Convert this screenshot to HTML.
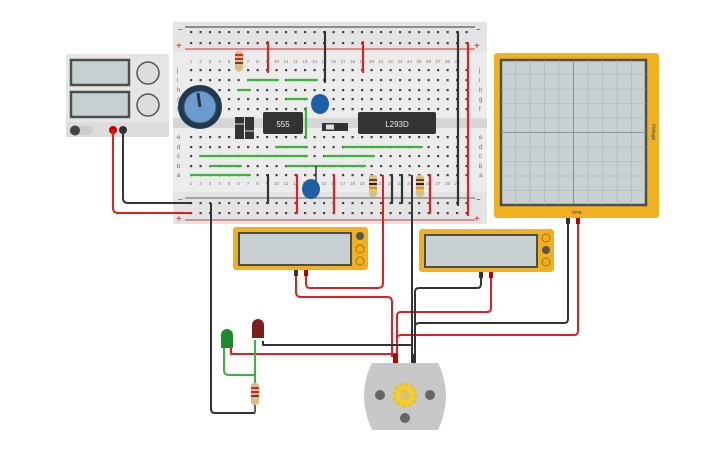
<!DOCTYPE html>
<html><head><meta charset="utf-8"><style>
html,body{margin:0;padding:0;background:#fff;width:725px;height:453px;overflow:hidden}
svg{display:block}
text{font-family:"Liberation Sans",sans-serif}
</style></head><body>
<svg width="725" height="453" viewBox="0 0 725 453" xmlns="http://www.w3.org/2000/svg">
<!-- breadboard -->
<rect x="173" y="22" width="314" height="202" rx="2" fill="#e4e4e4"/>
<rect x="173" y="52" width="314" height="140" fill="#ececec"/>
<rect x="173" y="118" width="314" height="10" fill="#d6d6d6"/>
<line x1="185" y1="27" x2="475" y2="27" stroke="#333" stroke-width="1"/>
<line x1="185" y1="49" x2="475" y2="49" stroke="#c33" stroke-width="1"/>
<line x1="185" y1="198" x2="475" y2="198" stroke="#666" stroke-width="1"/>
<line x1="185" y1="220" x2="475" y2="220" stroke="#c33" stroke-width="1"/>
<g id="holes"></g>
<text x="178" y="32" font-size="8" fill="#333">−</text><text x="176" y="49" font-size="10" fill="#c22">+</text>
<text x="476" y="32" font-size="8" fill="#333">−</text><text x="474" y="49" font-size="10" fill="#c22">+</text>
<text x="178" y="202" font-size="8" fill="#333">−</text><text x="176" y="222" font-size="10" fill="#c22">+</text>
<text x="476" y="202" font-size="8" fill="#333">−</text><text x="474" y="222" font-size="10" fill="#c22">+</text>
<g font-size="6" fill="#666">
<text x="177" y="72">j</text><text x="177" y="82">i</text><text x="177" y="92">h</text><text x="177" y="101">g</text><text x="177" y="111">f</text>
<text x="177" y="139">e</text><text x="177" y="149">d</text><text x="177" y="158">c</text><text x="177" y="168">b</text><text x="177" y="177">a</text>
<text x="479" y="72">j</text><text x="479" y="82">i</text><text x="479" y="92">h</text><text x="479" y="101">g</text><text x="479" y="111">f</text>
<text x="479" y="139">e</text><text x="479" y="149">d</text><text x="479" y="158">c</text><text x="479" y="168">b</text><text x="479" y="177">a</text>
</g>
<!-- power supply -->
<rect x="66" y="54" width="103" height="83" rx="2" fill="#e6e6e6"/>
<rect x="66" y="122" width="103" height="15" fill="#dcdcdc"/>
<rect x="71" y="60" width="58" height="25" fill="#c8d0d1" stroke="#4a4f50" stroke-width="2.5"/>
<rect x="71" y="92" width="58" height="25" fill="#c8d0d1" stroke="#4a4f50" stroke-width="2.5"/>
<circle cx="148" cy="73" r="11" fill="#ddd" stroke="#555" stroke-width="1.5"/>
<circle cx="148" cy="105" r="11" fill="#ddd" stroke="#555" stroke-width="1.5"/>
<rect x="69" y="126" width="24" height="9" rx="4.5" fill="#ccc"/><circle cx="75" cy="130.5" r="5" fill="#444"/>
<circle cx="113" cy="130" r="4" fill="#c00"/><circle cx="123" cy="130" r="4" fill="#333"/>
<path d="M123 130 V198 Q123 203 128 203 H192" fill="none" stroke="#333" stroke-width="2"/>
<path d="M113 130 V208 Q113 213 118 213 H192" fill="none" stroke="#e02020" stroke-width="2"/>
<!-- breadboard wires -->
<g fill="none" stroke-width="2.2" stroke-linecap="round">
<g stroke="#e02020">
<path d="M268 42V72M363 42V72M468 43V215M297 175V213M334 175V213M430 175V213"/>
</g>
<g stroke="#333">
<path d="M325 32V82M458 32V205M268 175V203M392 175V203M402 175V203"/>
</g>
<g stroke="#3db33d">
<path d="M248 80H278M287 80H317M238 90H250M287 99H307M306 108V138M277 147H307M344 147H422M201 156H307M325 156H374M210 166H241M287 166H365M191 175H250"/>
</g>
</g>
<!-- pot -->
<circle cx="200" cy="107" r="22" fill="#1f3a4f"/><circle cx="200" cy="107" r="16" fill="#6b9bd0" stroke="#456" stroke-width="1"/>
<line x1="200" y1="107" x2="198" y2="93" stroke="#1f3a4f" stroke-width="3"/>
<!-- resistor top -->
<rect x="235" y="51" width="8" height="20" rx="3" fill="#d9bf85"/><rect x="235" y="54" width="8" height="2" fill="#d22"/><rect x="235" y="58" width="8" height="2" fill="#d22"/><rect x="235" y="62" width="8" height="2" fill="#7a3e1a"/>
<!-- diodes -->
<rect x="235" y="117" width="9" height="22" fill="#333"/><rect x="245" y="117" width="9" height="22" fill="#333"/><rect x="245" y="130" width="9" height="2" fill="#888"/><rect x="235" y="123" width="9" height="2" fill="#888"/>
<!-- ICs -->
<rect x="263" y="112" width="40" height="22" rx="2" fill="#333"/><text x="283" y="127" font-size="8" fill="#eee" text-anchor="middle">555</text>
<rect x="358" y="112" width="78" height="22" rx="2" fill="#333"/><text x="397" y="127" font-size="8" fill="#eee" text-anchor="middle">L293D</text>
<rect x="322" y="123" width="26" height="8" fill="#333"/><rect x="326" y="124.5" width="8" height="5" fill="#ddd"/>
<!-- caps -->
<path d="M316 108 L316 96" stroke="#555" stroke-width="1.5"/><ellipse cx="320" cy="104" rx="9" ry="10" fill="#1f5fa6"/>
<path d="M316 166 V182" stroke="#333" stroke-width="1.5"/><ellipse cx="311" cy="189" rx="9" ry="10" fill="#1f5fa6"/>
<!-- resistors bottom -->
<rect x="369" y="175" width="8" height="22" rx="3" fill="#d9bf85"/><rect x="369" y="179" width="8" height="2" fill="#7a3e1a"/><rect x="369" y="183" width="8" height="2" fill="#222"/><rect x="369" y="187" width="8" height="2" fill="#f08a00"/>
<rect x="416" y="175" width="8" height="22" rx="3" fill="#d9bf85"/><rect x="416" y="179" width="8" height="2" fill="#7a3e1a"/><rect x="416" y="183" width="8" height="2" fill="#222"/><rect x="416" y="187" width="8" height="2" fill="#f08a00"/>
<!-- oscilloscope -->
<rect x="494" y="53" width="165" height="165" rx="3" fill="#f0b020"/>
<rect x="501" y="60" width="145" height="145" fill="#c8d0d1" stroke="#4a4f50" stroke-width="2.5"/>
<g stroke="#aab2b4" stroke-width="0.6">
<path d="M515.5 60V205M530 60V205M544.5 60V205M559 60V205M588 60V205M602.5 60V205M617 60V205M631.5 60V205M501 74.5H646M501 89H646M501 103.5H646M501 118H646M501 147H646M501 161.5H646M501 176H646M501 190.5H646"/>
</g>
<path d="M573.5 60V205M501 132.5H646" stroke="#7a8284" stroke-width="0.8"/>
<text x="577" y="214" font-size="5" fill="#444" text-anchor="middle">time</text>
<text x="652" y="132" font-size="5" fill="#444" text-anchor="middle" transform="rotate(90 652 132)">Voltage</text>
<!-- multimeters -->
<rect x="233" y="227" width="135" height="43" rx="3" fill="#f0b020"/>
<rect x="239" y="233" width="112" height="32" fill="#c8d0d1" stroke="#4a4f50" stroke-width="2"/>
<circle cx="360" cy="236" r="4" fill="#555"/><circle cx="360" cy="249" r="4" fill="none" stroke="#a87400"/><circle cx="360" cy="261" r="4" fill="none" stroke="#a87400"/>
<rect x="419" y="229" width="135" height="43" rx="3" fill="#f0b020"/>
<rect x="425" y="235" width="112" height="32" fill="#c8d0d1" stroke="#4a4f50" stroke-width="2"/>
<circle cx="546" cy="238" r="4" fill="none" stroke="#a87400"/><circle cx="546" cy="250" r="4" fill="#555"/><circle cx="546" cy="262" r="4" fill="none" stroke="#a87400"/>
<!-- probes -->
<rect x="294" y="270" width="4" height="6" fill="#333"/><rect x="304" y="270" width="4" height="6" fill="#b00"/>
<rect x="479" y="272" width="4" height="6" fill="#333"/><rect x="489" y="272" width="4" height="6" fill="#b00"/>
<rect x="566" y="218" width="4" height="6" fill="#333"/><rect x="576" y="218" width="4" height="6" fill="#b00"/>
<!-- external wires -->
<g fill="none" stroke-width="2" stroke-linejoin="round">
<path d="M306 276V284Q306 288 310 288H378Q383 288 383 283V175" stroke="#e02020"/>
<path d="M296 276V292Q296 297 301 297H387Q392 297 392 302V357" stroke="#e02020"/>
<path d="M491 278V308Q491 312 487 312H401Q397 312 397 316V357" stroke="#e02020"/>
<path d="M578 224V331Q578 335 574 335H401Q397 335 397 339" stroke="#e02020"/>
<path d="M481 278V284Q481 288 477 288H419Q415 288 415 292V357" stroke="#333"/>
<path d="M568 224V319Q568 323 564 323H419Q415 323 415 327" stroke="#333"/>
<path d="M412 175V357" stroke="#333"/>
<path d="M211 203V409Q211 413 215 413H255" stroke="#333"/>
<path d="M263 341V345H412" stroke="#333"/>
<path d="M231 348V354H396" stroke="#e02020"/>
<path d="M224 348V370Q224 375 229 375H255" stroke="#3db33d"/>
<path d="M255 340V384" stroke="#3db33d"/>
<path d="M255 403V413" stroke="#666"/>
</g>
<!-- LEDs -->
<path d="M221 348V335a6 6 0 0 1 12 0V348Z" fill="#1f8a2a"/>
<path d="M252 338V325a6 6 0 0 1 12 0V338Z" fill="#7a1e1e"/>
<!-- led resistor -->
<rect x="251" y="383" width="8" height="22" rx="3" fill="#d9bf85"/><rect x="251" y="387" width="8" height="2" fill="#d22"/><rect x="251" y="391" width="8" height="2" fill="#d22"/><rect x="251" y="395" width="8" height="2" fill="#7a3e1a"/>
<!-- motor -->
<rect x="393" y="354" width="5" height="9" fill="#b00"/><rect x="411" y="354" width="5" height="9" fill="#333"/>
<path d="M372 363H438Q454 395 438 430H372Q356 395 372 363Z" fill="#c8c8c8"/>
<circle cx="380" cy="395" r="5" fill="#666"/><circle cx="430" cy="395" r="5" fill="#666"/><circle cx="405" cy="418" r="5" fill="#666"/>
<circle cx="405" cy="395" r="11" fill="#f0cf30" stroke="#e8c020" stroke-width="3" stroke-dasharray="3 2.7"/>
<circle cx="405" cy="395" r="5" fill="#d8c070"/>
</svg>
<script>
(function(){
var g=document.getElementById('holes'),s='';
var rowsMain=[70,80,90,99,109,137,147,156,166,175];
for(var c=0;c<30;c++){var x=191+c*9.5;
 rowsMain.forEach(function(y){s+='<rect x="'+(x-1)+'" y="'+(y-1)+'" width="2.2" height="2.2" fill="#444"/>';});
 if(c<29) s+='<text x="'+(x)+'" y="63" font-size="4.5" fill="#777" text-anchor="middle">'+(c+1)+'</text><text x="'+x+'" y="185" font-size="4.5" fill="#777" text-anchor="middle">'+(c+1)+'</text>';
 [32,43,203,213].forEach(function(y){s+='<rect x="'+(x-1)+'" y="'+(y-1)+'" width="2.2" height="2.2" fill="#444"/>';});
}
g.innerHTML=s;
})();
</script>
</body></html>
